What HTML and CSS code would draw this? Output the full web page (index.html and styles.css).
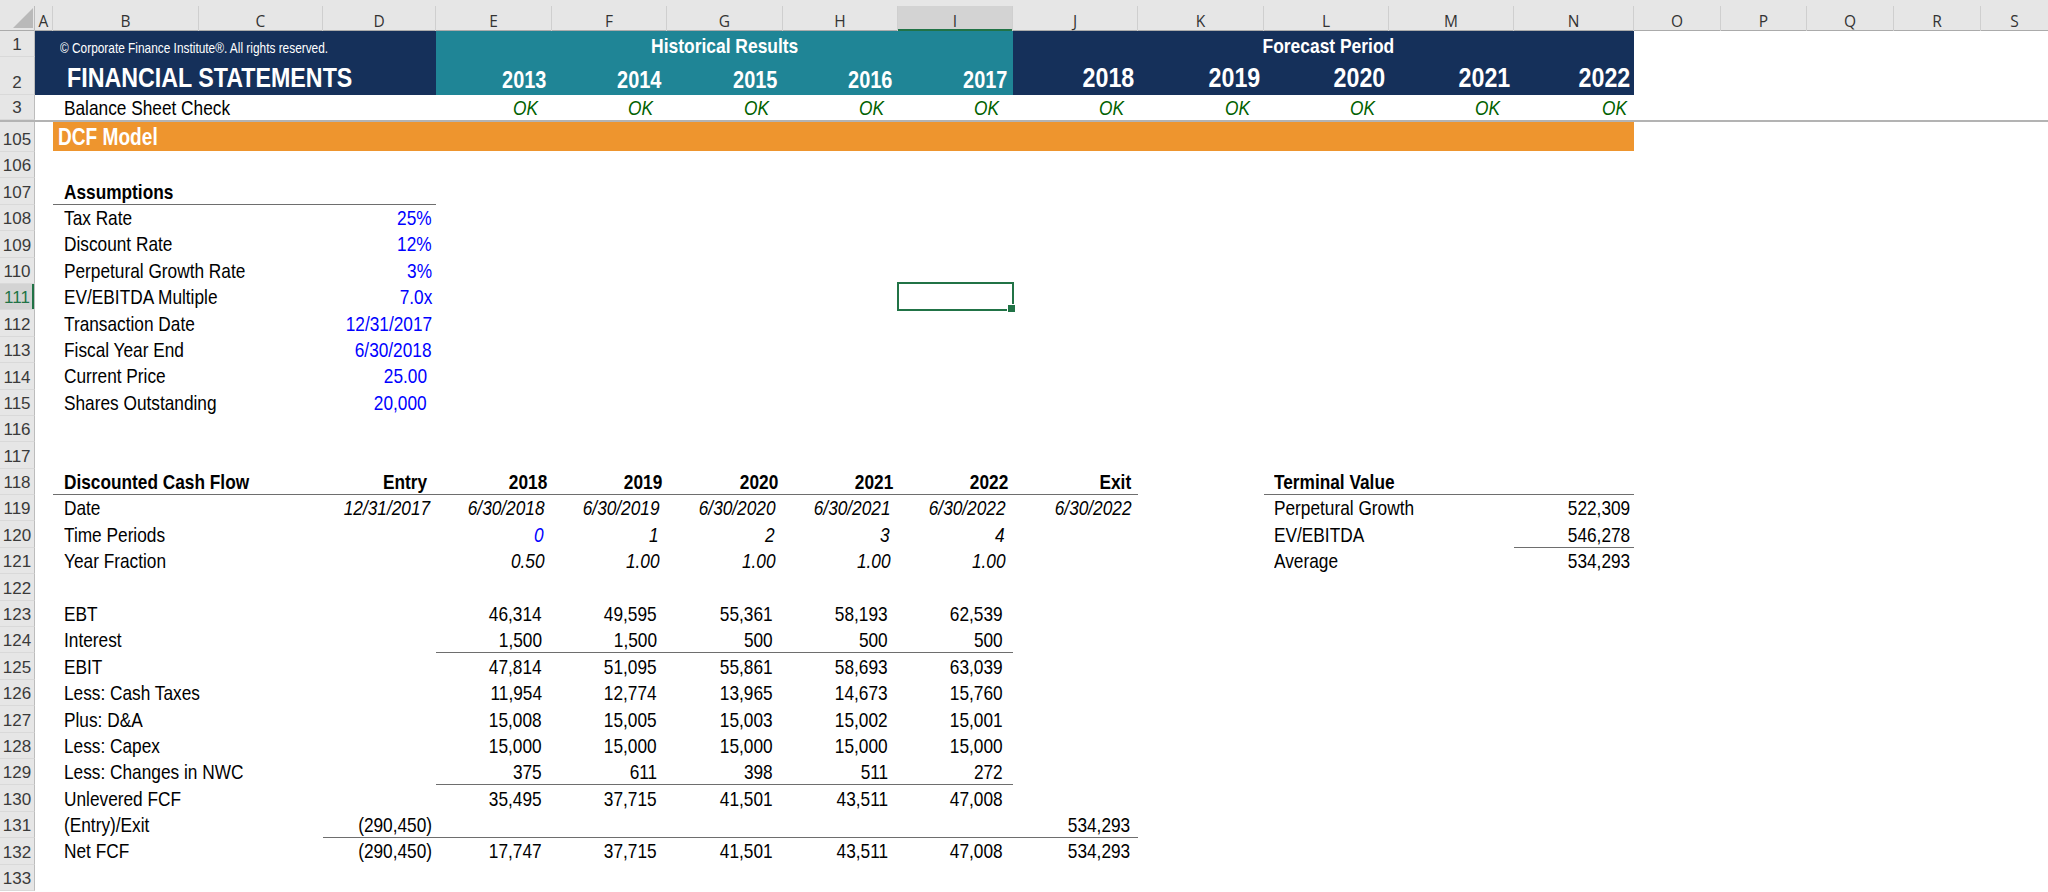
FILE: index.html
```html
<!DOCTYPE html>
<html lang="en">
<head>
<meta charset="utf-8">
<title>DCF Model</title>
<link rel="stylesheet" href="styles.css">
</head>
<body>
<div class="sheet">
  <div class="colhead">
    <div class="corner"><svg width="35" height="25" viewBox="0 0 35 25"><polygon points="13,22 33,22 33,2" fill="#b9b9b9"/></svg></div>
    <div>A</div><div>B</div><div>C</div><div>D</div><div>E</div><div>F</div><div>G</div><div>H</div><div class="selc">I</div><div>J</div><div>K</div><div>L</div><div>M</div><div>N</div><div>O</div><div>P</div><div>Q</div><div>R</div><div class="last">S</div>
  </div>

  <div class="row r1">
    <div class="rh">1</div>
    <div class="c navy cAD copy lbl"><span>© Corporate Finance Institute®. All rights reserved.</span></div>
    <div class="c teal cEI band"><span>Historical Results</span></div>
    <div class="c navy cJN band fc"><span>Forecast Period</span></div>
  </div>
  <div class="row r2">
    <div class="rh">2</div>
    <div class="c navy cAD title lbl"><span>FINANCIAL STATEMENTS</span></div>
    <div class="c teal cE yr val"><span>2013</span></div>
    <div class="c teal cF yr val"><span>2014</span></div>
    <div class="c teal cG yr val"><span>2015</span></div>
    <div class="c teal cH yr val"><span>2016</span></div>
    <div class="c teal cI yr val"><span>2017</span></div>
    <div class="c navy cJ yr big val"><span>2018</span></div>
    <div class="c navy cK yr big val"><span>2019</span></div>
    <div class="c navy cL yr big val"><span>2020</span></div>
    <div class="c navy cM yr big val"><span>2021</span></div>
    <div class="c navy cN yr big val"><span>2022</span></div>
  </div>
  <div class="row r3">
    <div class="rh">3</div>
    <div class="c cBC lbl"><span>Balance Sheet Check</span></div>
    <div class="c cE ok val"><span>OK</span></div>
    <div class="c cF ok val"><span>OK</span></div>
    <div class="c cG ok val"><span>OK</span></div>
    <div class="c cH ok val"><span>OK</span></div>
    <div class="c cI ok val"><span>OK</span></div>
    <div class="c cJ ok val"><span>OK</span></div>
    <div class="c cK ok val"><span>OK</span></div>
    <div class="c cL ok val"><span>OK</span></div>
    <div class="c cM ok val"><span>OK</span></div>
    <div class="c cN ok okn val"><span>OK</span></div>
  </div>
  <div class="row r105">
    <div class="rh">105</div>
    <div class="c cBN section lbl"><span>DCF Model</span></div>
  </div>

  <div class="row"><div class="rh">106</div></div>
  <div class="row ul-bd">
    <div class="rh">107</div>
    <div class="c cBC lbl b"><span>Assumptions</span></div>
  </div>
  <div class="row">
    <div class="rh">108</div>
    <div class="c cBC lbl"><span>Tax Rate</span></div>
    <div class="c cD val inp pct"><span>25%</span></div>
  </div>
  <div class="row">
    <div class="rh">109</div>
    <div class="c cBC lbl"><span>Discount Rate</span></div>
    <div class="c cD val inp pct"><span>12%</span></div>
  </div>
  <div class="row">
    <div class="rh">110</div>
    <div class="c cBC lbl"><span>Perpetural Growth Rate</span></div>
    <div class="c cD val inp pct"><span>3%</span></div>
  </div>
  <div class="row">
    <div class="rh active">111</div>
    <div class="c cBC lbl"><span>EV/EBITDA Multiple</span></div>
    <div class="c cD val inp pct"><span>7.0x</span></div>
  </div>
  <div class="row">
    <div class="rh">112</div>
    <div class="c cBC lbl"><span>Transaction Date</span></div>
    <div class="c cD val inp pct"><span>12/31/2017</span></div>
  </div>
  <div class="row">
    <div class="rh">113</div>
    <div class="c cBC lbl"><span>Fiscal Year End</span></div>
    <div class="c cD val inp pct"><span>6/30/2018</span></div>
  </div>
  <div class="row">
    <div class="rh">114</div>
    <div class="c cBC lbl"><span>Current Price</span></div>
    <div class="c cD val inp amt"><span>25.00</span></div>
  </div>
  <div class="row">
    <div class="rh">115</div>
    <div class="c cBC lbl"><span>Shares Outstanding</span></div>
    <div class="c cD val inp amt"><span>20,000</span></div>
  </div>
  <div class="row"><div class="rh">116</div></div>
  <div class="row"><div class="rh">117</div></div>

  <div class="row ul-bj ul-ln">
    <div class="rh">118</div>
    <div class="c cBC lbl b"><span>Discounted Cash Flow</span></div>
    <div class="c cD val b entry"><span>Entry</span></div>
    <div class="c cE val b hd"><span>2018</span></div>
    <div class="c cF val b hd"><span>2019</span></div>
    <div class="c cG val b hd"><span>2020</span></div>
    <div class="c cH val b hd"><span>2021</span></div>
    <div class="c cI val b hd"><span>2022</span></div>
    <div class="c cJ val b exit"><span>Exit</span></div>
    <div class="c cLM lbl tvl b"><span>Terminal Value</span></div>
  </div>
  <div class="row">
    <div class="rh">119</div>
    <div class="c cBC lbl"><span>Date</span></div>
    <div class="c cD val i dtd"><span>12/31/2017</span></div>
    <div class="c cE val i dt"><span>6/30/2018</span></div>
    <div class="c cF val i dt"><span>6/30/2019</span></div>
    <div class="c cG val i dt"><span>6/30/2020</span></div>
    <div class="c cH val i dt"><span>6/30/2021</span></div>
    <div class="c cI val i dt"><span>6/30/2022</span></div>
    <div class="c cJ val i dtj"><span>6/30/2022</span></div>
    <div class="c cLM lbl tvl"><span>Perpetural Growth</span></div>
    <div class="c cN val tv"><span>522,309</span></div>
  </div>
  <div class="row ul-n">
    <div class="rh">120</div>
    <div class="c cBC lbl"><span>Time Periods</span></div>
    <div class="c cE val i per inp"><span>0</span></div>
    <div class="c cF val i per"><span>1</span></div>
    <div class="c cG val i per"><span>2</span></div>
    <div class="c cH val i per"><span>3</span></div>
    <div class="c cI val i per"><span>4</span></div>
    <div class="c cLM lbl tvl"><span>EV/EBITDA</span></div>
    <div class="c cN val tv"><span>546,278</span></div>
  </div>
  <div class="row">
    <div class="rh">121</div>
    <div class="c cBC lbl"><span>Year Fraction</span></div>
    <div class="c cE val i per"><span>0.50</span></div>
    <div class="c cF val i per"><span>1.00</span></div>
    <div class="c cG val i per"><span>1.00</span></div>
    <div class="c cH val i per"><span>1.00</span></div>
    <div class="c cI val i per"><span>1.00</span></div>
    <div class="c cLM lbl tvl"><span>Average</span></div>
    <div class="c cN val tv"><span>534,293</span></div>
  </div>
  <div class="row"><div class="rh">122</div></div>

  <div class="row">
    <div class="rh">123</div>
    <div class="c cBC lbl"><span>EBT</span></div>
    <div class="c cE val num"><span>46,314</span></div>
    <div class="c cF val num"><span>49,595</span></div>
    <div class="c cG val num"><span>55,361</span></div>
    <div class="c cH val num"><span>58,193</span></div>
    <div class="c cI val num"><span>62,539</span></div>
  </div>
  <div class="row ul-ei">
    <div class="rh">124</div>
    <div class="c cBC lbl"><span>Interest</span></div>
    <div class="c cE val num"><span>1,500</span></div>
    <div class="c cF val num"><span>1,500</span></div>
    <div class="c cG val num"><span>500</span></div>
    <div class="c cH val num"><span>500</span></div>
    <div class="c cI val num"><span>500</span></div>
  </div>
  <div class="row">
    <div class="rh">125</div>
    <div class="c cBC lbl"><span>EBIT</span></div>
    <div class="c cE val num"><span>47,814</span></div>
    <div class="c cF val num"><span>51,095</span></div>
    <div class="c cG val num"><span>55,861</span></div>
    <div class="c cH val num"><span>58,693</span></div>
    <div class="c cI val num"><span>63,039</span></div>
  </div>
  <div class="row">
    <div class="rh">126</div>
    <div class="c cBC lbl"><span>Less: Cash Taxes</span></div>
    <div class="c cE val num"><span>11,954</span></div>
    <div class="c cF val num"><span>12,774</span></div>
    <div class="c cG val num"><span>13,965</span></div>
    <div class="c cH val num"><span>14,673</span></div>
    <div class="c cI val num"><span>15,760</span></div>
  </div>
  <div class="row">
    <div class="rh">127</div>
    <div class="c cBC lbl"><span>Plus: D&amp;A</span></div>
    <div class="c cE val num"><span>15,008</span></div>
    <div class="c cF val num"><span>15,005</span></div>
    <div class="c cG val num"><span>15,003</span></div>
    <div class="c cH val num"><span>15,002</span></div>
    <div class="c cI val num"><span>15,001</span></div>
  </div>
  <div class="row">
    <div class="rh">128</div>
    <div class="c cBC lbl"><span>Less: Capex</span></div>
    <div class="c cE val num"><span>15,000</span></div>
    <div class="c cF val num"><span>15,000</span></div>
    <div class="c cG val num"><span>15,000</span></div>
    <div class="c cH val num"><span>15,000</span></div>
    <div class="c cI val num"><span>15,000</span></div>
  </div>
  <div class="row ul-ei">
    <div class="rh">129</div>
    <div class="c cBC lbl"><span>Less: Changes in NWC</span></div>
    <div class="c cE val num"><span>375</span></div>
    <div class="c cF val num"><span>611</span></div>
    <div class="c cG val num"><span>398</span></div>
    <div class="c cH val num"><span>511</span></div>
    <div class="c cI val num"><span>272</span></div>
  </div>
  <div class="row">
    <div class="rh">130</div>
    <div class="c cBC lbl"><span>Unlevered FCF</span></div>
    <div class="c cE val num"><span>35,495</span></div>
    <div class="c cF val num"><span>37,715</span></div>
    <div class="c cG val num"><span>41,501</span></div>
    <div class="c cH val num"><span>43,511</span></div>
    <div class="c cI val num"><span>47,008</span></div>
  </div>
  <div class="row ul-dj">
    <div class="rh">131</div>
    <div class="c cBC lbl"><span>(Entry)/Exit</span></div>
    <div class="c cD val neg"><span>(290,450)</span></div>
    <div class="c cJ val numj"><span>534,293</span></div>
  </div>
  <div class="row">
    <div class="rh">132</div>
    <div class="c cBC lbl"><span>Net FCF</span></div>
    <div class="c cD val neg"><span>(290,450)</span></div>
    <div class="c cE val num"><span>17,747</span></div>
    <div class="c cF val num"><span>37,715</span></div>
    <div class="c cG val num"><span>41,501</span></div>
    <div class="c cH val num"><span>43,511</span></div>
    <div class="c cI val num"><span>47,008</span></div>
    <div class="c cJ val numj"><span>534,293</span></div>
  </div>
  <div class="row"><div class="rh">133</div></div>
</div>
<div class="selbox"></div>
</body>
</html>
```

FILE: styles.css
```css
:root {
  --cols: 35px 18px 146px 124px 113px 116px 115px 116px 115px 115px 125px 126px 125px 125px 120px 87px 86px 87px 87px 1fr;
  --navy: #15305a;
  --teal: #1f8596;
  --orange: #ee952e;
  --line: #6e6e6e;
  --xlgreen: #217346;
}

* { box-sizing: border-box; }

html, body {
  margin: 0;
  padding: 0;
  background: #ffffff;
}

body {
  width: 2048px;
  height: 892px;
  overflow: hidden;
  position: relative;
  font-family: "Liberation Sans", Arial, sans-serif;
  font-size: 20.8px;
  color: #000;
}

.sheet { width: 2048px; }

/* column header */
.colhead {
  display: grid;
  grid-template-columns: var(--cols);
  height: 31px;
  background: #e6e6e6;
  border-bottom: 1px solid #ababab;
  font-family: "Open Sans", "DejaVu Sans", sans-serif;
  font-size: 15.5px;
  color: #333;
}
.colhead > div {
  margin-top: 6px;
  border-right: 1px solid #cfcfcf;
  display: flex;
  align-items: flex-end;
  justify-content: center;
  line-height: 1;
  padding-bottom: 2px;
}
.colhead > .corner {
  display: block;
  padding: 0;
  border-right: 1px solid #bcbcbc;
}
.colhead > .corner svg { display: block; }
.colhead > .selc {
  background: #d3d3d3;
  box-shadow: inset 0 -2px 0 var(--xlgreen);
}
.colhead > .last { border-right: none; }

/* rows */
.row {
  display: grid;
  grid-template-columns: var(--cols);
  height: 26.4px;
}
.row > * { grid-row: 1; }

.rh {
  grid-column: 1;
  background: #e6e6e6;
  border-right: 1px solid #bcbcbc;
  border-bottom: 1px solid #d9d9d9;
  font-family: "Liberation Sans", Arial, sans-serif;
  font-size: 17px;
  color: #3a3a3a;
  display: flex;
  align-items: flex-end;
  justify-content: center;
  line-height: 1;
  padding-bottom: 3px;
}
.rh.active {
  background: #d3d3d3;
  color: var(--xlgreen);
  box-shadow: inset -2px 0 0 var(--xlgreen);
}

.r1 { height: 26px; }
.r2 { height: 38px; }
.r3 { height: 27px; border-bottom: 2px solid #b3b3b3; }
.r105 { height: 30px; }

/* cells: Arial Narrow is Arial drawn at ~82% width */
.c {
  display: flex;
  align-items: flex-end;
  line-height: 1;
  padding-bottom: 2.3px;
  white-space: nowrap;
  min-width: 0;
}
.c > span {
  display: inline-block;
  transform: scaleX(0.83);
  transform-origin: 50% 50%;
}
.lbl > span { transform-origin: 0 50%; }
.val > span { transform-origin: 100% 50%; }

.cAD { grid-column: 2 / 6; }
.cBC { grid-column: 3 / 5; }
.cBN { grid-column: 3 / 16; }
.cEI { grid-column: 6 / 11; }
.cJN { grid-column: 11 / 16; }
.cLM { grid-column: 13 / 15; }
.cD { grid-column: 5; }
.cE { grid-column: 6; }
.cF { grid-column: 7; }
.cG { grid-column: 8; }
.cH { grid-column: 9; }
.cI { grid-column: 10; }
.cJ { grid-column: 11; }
.cK { grid-column: 12; }
.cL { grid-column: 13; }
.cM { grid-column: 14; }
.cN { grid-column: 15; }

.navy { background: var(--navy); color: #fff; }
.teal { background: var(--teal); color: #fff; }

.lbl { padding-left: 11px; }
.lbl.tvl { padding-left: 10px; }

.copy.lbl { font-size: 14.3px; padding-left: 25px; padding-bottom: 2px; }
.band { font-weight: bold; font-size: 21px; justify-content: center; padding-bottom: 1px; }
.band.fc { padding-left: 9px; }
.title.lbl { font-weight: bold; font-size: 28px; padding-left: 32px; padding-bottom: 2.7px; }
.yr { font-weight: bold; font-size: 24px; justify-content: flex-end; padding-right: 6px; padding-bottom: 3.4px; }
.yr.big { font-size: 28px; padding-right: 4px; padding-bottom: 2.7px; }

.r3 .c { padding-bottom: 1px; }
.ok { font-style: italic; color: #006100; justify-content: flex-end; padding-right: 14px; }
.ok.okn { padding-right: 7px; }

.section.lbl {
  background: var(--orange);
  color: #fff;
  font-weight: bold;
  font-size: 23px;
  padding-left: 5px;
  padding-bottom: 2px;
  margin-bottom: 1px;
}

.b { font-weight: bold; }
.i { font-style: italic; }
.val { justify-content: flex-end; }
.inp { color: #0000ff; }

.pct { padding-right: 4px; }
.amt { padding-right: 9px; }
.entry { padding-right: 9px; }
.hd { padding-right: 5px; }
.exit { padding-right: 7px; }
.dt { padding-right: 7px; }
.dtd { padding-right: 6px; }
.dtj { padding-right: 6px; }
.per { padding-right: 8px; }
.num { padding-right: 10px; }
.numj { padding-right: 8px; }
.neg { padding-right: 4px; }
.tv { padding-right: 4px; }

/* underlines */
.ul-bd::after,
.ul-bj::before,
.ul-ln::after,
.ul-n::after,
.ul-ei::after,
.ul-dj::after {
  content: "";
  grid-row: 1;
  border-bottom: 1px solid var(--line);
}
.ul-bd::after { grid-column: 3 / 6; }
.ul-bj::before { grid-column: 3 / 12; }
.ul-ln::after { grid-column: 13 / 16; }
.ul-n::after { grid-column: 15; }
.ul-ei::after { grid-column: 6 / 11; }
.ul-dj::after { grid-column: 5 / 12; }

/* active cell I111 (overlay) */
.selbox {
  position: absolute;
  left: 897px;
  top: 282px;
  width: 117px;
  height: 29px;
  border: 2px solid var(--xlgreen);
}
.selbox::after {
  content: "";
  position: absolute;
  right: -4px;
  bottom: -4px;
  width: 7px;
  height: 7px;
  background: var(--xlgreen);
  border: 1px solid #fff;
}
```
